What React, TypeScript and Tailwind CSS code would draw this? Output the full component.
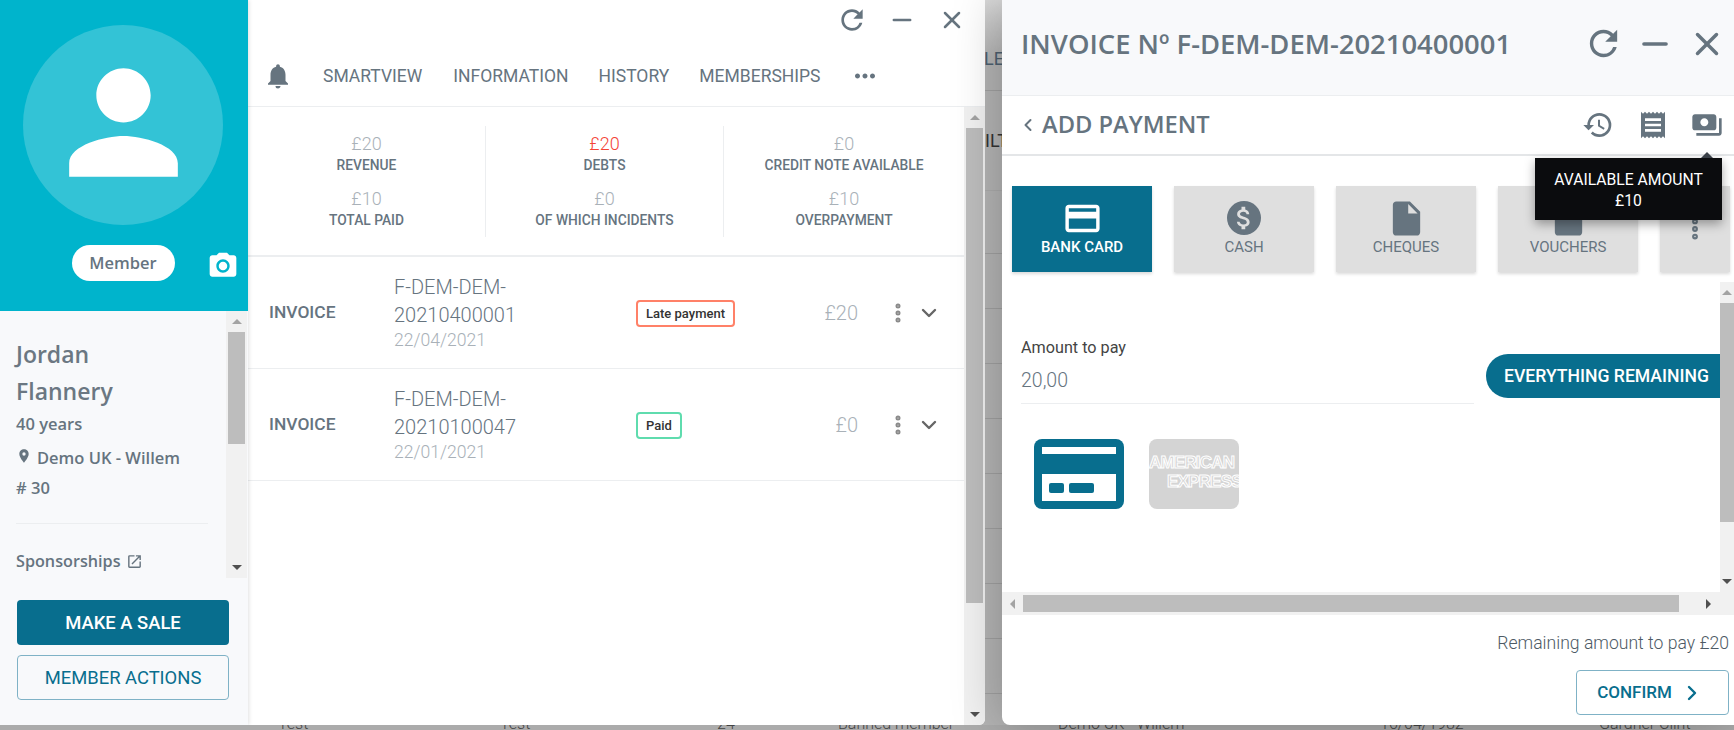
import { ChevronDown, ChevronLeft, ChevronRight, EllipsisVertical, Minus, X } from "lucide-react";
import { MdAttachMoney, MdCameraAlt, MdCreditCard, MdHistory, MdInsertDriveFile, MdLocationOn, MdMoreHoriz, MdNotifications, MdOpenInNew, MdPayments, MdPerson, MdReceipt, MdRefresh } from "react-icons/md";
import type { ReactNode } from "react";

const stats = [
  [
    { value: "£20", label: "REVENUE" },
    { value: "£10", label: "TOTAL PAID" },
  ],
  [
    { value: "£20", label: "DEBTS", red: true },
    { value: "£0", label: "OF WHICH INCIDENTS" },
  ],
  [
    { value: "£0", label: "CREDIT NOTE AVAILABLE" },
    { value: "£10", label: "OVERPAYMENT" },
  ],
];

const invoices = [
  { id1: "F-DEM-DEM-", id2: "20210400001", date: "22/04/2021", status: "Late payment", border: "border-[#ff8168]", amount: "£20" },
  { id1: "F-DEM-DEM-", id2: "20210100047", date: "22/01/2021", status: "Paid", border: "border-[#5fdcae]", amount: "£0" },
];

function Arrow({ dir }: { dir: "up" | "down" | "left" | "right" }) {
  const shape = {
    up: "border-x-[5px] border-b-[5px] border-x-transparent border-b-[#a3a3a3]",
    down: "border-x-[5px] border-t-[5px] border-x-transparent border-t-[#505050]",
    left: "border-y-[5px] border-r-[5px] border-y-transparent border-r-[#a3a3a3]",
    right: "border-y-[5px] border-l-[5px] border-y-transparent border-l-[#505050]",
  }[dir];
  return <div className={`w-0 h-0 ${shape}`} />;
}

function Tile({ icon, label, active }: { icon: ReactNode; label: string; active?: boolean }) {
  return (
    <div
      className={`w-[140px] h-[86px] shrink-0 flex flex-col items-center pt-[12px] shadow-[0_2px_3px_rgba(0,0,0,0.15)] ${
        active ? "bg-[#086e8e] text-white" : "bg-[#dfdfdf] text-[#66747f]"
      }`}
    >
      <div className="h-[40px] flex items-center justify-center">{icon}</div>
      <div className={`text-[15px] leading-[18px] ${active ? "font-medium" : ""}`}>{label}</div>
    </div>
  );
}

export default function App() {
  return (
    <div className="relative w-[1734px] h-[730px] overflow-hidden bg-[#b4b4b4] font-['Roboto',sans-serif] text-[#66747f]">
      <div className="flex h-[725px]">
        {/* Member panel */}
        <div className="w-[985px] shrink-0 flex bg-white rounded-br-[6px] overflow-hidden">
          <div className="w-[248px] shrink-0 flex flex-col bg-[#f8f9fb] shadow-[1px_0_4px_rgba(0,0,0,0.12)] z-10 font-['Open_Sans',sans-serif]">
            <div className="h-[311px] bg-[#00b4cc] flex flex-col items-center pt-[25px] pr-[2px]">
              <div className="w-[200px] h-[200px] rounded-full bg-[#33c3d6] flex items-center justify-center pb-[5px]">
                <MdPerson className="text-white" size={163} />
              </div>
              <div className="w-full relative flex justify-center mt-[20px]">
                <div className="w-[103px] h-[36px] rounded-full bg-white flex items-center justify-center text-[16.5px] font-semibold">Member</div>
                <MdCameraAlt className="absolute left-[207px] top-[5px] text-white" size={32} />
              </div>
            </div>
            <div className="h-[267px] flex">
              <div className="flex-1 pl-[16px] pt-[24px] pr-[10px] font-semibold overflow-hidden">
                <div className="text-[23px] leading-[38px] text-[#6b7782]">Jordan</div>
                <div className="text-[23px] leading-[37px] text-[#6b7782]">Flannery</div>
                <div className="text-[16.5px] leading-[28px]">40 years</div>
                <div className="text-[16.5px] leading-[28px] mt-[6px] flex items-center whitespace-nowrap">
                  <MdLocationOn size={16} className="-mt-[4px] mr-[5px] shrink-0" />
                  Demo UK - Willem
                </div>
                <div className="text-[16.5px] leading-[28px] mt-[2px]"># 30</div>
                <div className="h-px bg-[#eceef0] mt-[21px] mr-[8px]" />
                <div className="text-[16.2px] mt-[25px] flex items-center">
                  Sponsorships
                  <MdOpenInNew size={17} className="ml-[5px]" />
                </div>
              </div>
              <div className="w-[21px] mr-px shrink-0 bg-[#f1f1f1] flex flex-col items-center">
                <div className="h-[21px] flex items-center"><Arrow dir="up" /></div>
                <div className="w-[17px] h-[112px] bg-[#bdbdbd]" />
                <div className="flex-1" />
                <div className="h-[21px] flex items-center"><Arrow dir="down" /></div>
              </div>
            </div>
            <div className="pl-[17px] pr-[19px] pt-[22px]">
              <div className="h-[45px] rounded-[4px] bg-[#086e8e] text-white flex items-center justify-center text-[18.4px] font-medium font-['Roboto',sans-serif]">MAKE A SALE</div>
              <div className="h-[45px] mt-[10px] rounded-[4px] border border-[#7fb2c6] text-[#086e8e] flex items-center justify-center text-[18.4px] font-['Roboto',sans-serif]">MEMBER ACTIONS</div>
            </div>
          </div>

          <div className="flex-1 flex flex-col min-w-0">
            <div className="h-[107px] shrink-0 border-b border-[#eceef0]">
              <div className="flex justify-end items-center gap-[22px] pr-[19px] pt-[6px]">
                <div className="w-[28px] h-[28px] flex items-center justify-center"><MdRefresh size={32} className="shrink-0" /></div>
                <Minus size={28} strokeWidth={2.2} />
                <X size={28} strokeWidth={2.2} />
              </div>
              <div className="flex items-center mt-[27px] pl-[15px] text-[17.5px]">
                <MdNotifications size={30} />
                <span className="ml-[30px]">SMARTVIEW</span>
                <span className="ml-[31px]">INFORMATION</span>
                <span className="ml-[30px]">HISTORY</span>
                <span className="ml-[30px]">MEMBERSHIPS</span>
                <MdMoreHoriz size={30} className="ml-[30px]" />
              </div>
            </div>

            <div className="flex-1 flex min-h-0">
              <div className="flex-1 min-w-0">
                <div className="h-[150px] flex items-center border-b-2 border-[#eceef0]">
                  {stats.map((col, i) => (
                    <div key={i} className={`h-[111px] flex flex-col items-center ${i < 2 ? "w-[238px] border-r border-[#eceef0]" : "flex-1"}`}>
                      {col.map((s) => (
                        <div key={s.label} className="h-[56px] flex flex-col items-center pt-[8px]">
                          <div className={`text-[18px] leading-[20px] font-light ${"red" in s && s.red ? "text-[#f44336]" : "text-[#a9b1b8]"}`}>{s.value}</div>
                          <div className="text-[13.8px] leading-[20px] mt-px font-medium">{s.label}</div>
                        </div>
                      ))}
                    </div>
                  ))}
                </div>
                {invoices.map((inv) => (
                  <div key={inv.id2} className="h-[112px] flex items-center border-b border-[#eceef0]">
                    <div className="w-[146px] pl-[21px] text-[17.4px] font-medium">INVOICE</div>
                    <div className="w-[242px] text-[20px] font-light leading-[28px] -mt-[2px]">
                      <div>{inv.id1}</div>
                      <div>{inv.id2}</div>
                      <div className="text-[17.6px] leading-[22px] text-[#a9b1b8]">{inv.date}</div>
                    </div>
                    <div className="flex-1 pt-[2px]">
                      <span className={`inline-block h-[27px] leading-[23px] px-[8px] rounded-[4px] border-2 bg-white text-[13px] font-medium text-[#333] ${inv.border}`}>{inv.status}</span>
                    </div>
                    <div className="text-[20px] font-light text-[#a9b1b8]">{inv.amount}</div>
                    <EllipsisVertical size={24} strokeWidth={3} className="ml-[28px] text-[#8a8a8a]" />
                    <ChevronDown size={24} strokeWidth={2.4} className="ml-[7px] mr-[23px] text-[#666]" />
                  </div>
                ))}
              </div>
              <div className="w-[21px] shrink-0 bg-[#f1f1f1] flex flex-col items-center">
                <div className="h-[21px] flex items-center"><Arrow dir="up" /></div>
                <div className="w-[17px] h-[475px] bg-[#bdbdbd]" />
                <div className="flex-1" />
                <div className="h-[21px] flex items-center"><Arrow dir="down" /></div>
              </div>
            </div>
          </div>
        </div>

        {/* Strip of the page behind */}
        <div className="w-[17px] shrink-0 text-[18px] overflow-hidden whitespace-nowrap bg-gradient-to-b from-[#d8d8d8] via-[#b4b4b4] via-[8%] to-[#b4b4b4]">
          <div className="h-[91px] pt-[48px] leading-[22px] border-b border-[#a0a0a0] text-[#4d6070]"><span className="-ml-[1px]">LEF</span></div>
          <div className="h-[100px] pt-[39px] leading-[22px] border-b border-[#ababab] text-[#333]"><span>ILT</span></div>
          <div className="h-[63px] border-b border-[#a0a0a0]" />
          {[0, 1, 2, 3, 4, 5, 6, 7, 8].map((n) => (
            <div key={n} className="h-[55px] border-b border-[#a0a0a0]" />
          ))}
        </div>

        {/* Invoice panel */}
        <div className="relative w-[732px] shrink-0 bg-white rounded-bl-[8px] flex flex-col shadow-[0_0_50px_rgba(0,0,0,0.25)] z-20">
          <div className="h-[96px] shrink-0 bg-[#f8f9fb] border-b border-[#eceef0] flex items-center pl-[19px] pr-[8px] pb-[8px] font-['Open_Sans',sans-serif]">
            <div className="flex-1 text-[27.4px] font-semibold text-[#66747f] whitespace-nowrap">INVOICE Nº F-DEM-DEM-20210400001</div>
            <div className="flex items-center gap-[14px]">
              <div className="w-[38px] h-[38px] flex items-center justify-center"><MdRefresh size={41} className="shrink-0" /></div>
              <Minus size={38} strokeWidth={2.2} />
              <X size={38} strokeWidth={2.2} />
            </div>
          </div>
          <div className="h-[60px] shrink-0 border-b-2 border-[#e4e6e8] flex items-center pl-[16px] pr-[11px]">
            <ChevronLeft size={20} strokeWidth={2.4} />
            <div className="flex-1 ml-[4px] text-[23.7px] font-['Open_Sans',sans-serif] font-semibold">ADD PAYMENT</div>
            <div className="flex items-center gap-[22.5px]">
              <MdHistory size={32} />
              <MdReceipt size={32} />
              <MdPayments size={32} />
            </div>
          </div>
          <div className="flex gap-[22px] pl-[10px] pt-[30px] h-[126px] shrink-0 overflow-hidden">
            <Tile label="BANK CARD" active icon={<MdCreditCard size={41} />} />
            <Tile label="CASH" icon={<span className="w-[34px] h-[34px] rounded-full bg-[#66747f] flex items-center justify-center"><MdAttachMoney size={30} className="text-[#dfdfdf]" /></span>} />
            <Tile label="CHEQUES" icon={<MdInsertDriveFile size={41} />} />
            <Tile label="VOUCHERS" icon={<MdInsertDriveFile size={41} />} />
            <div className="w-[70px] h-[86px] shrink-0 bg-[#dfdfdf] flex justify-center items-center shadow-[0_2px_3px_rgba(0,0,0,0.15)]">
              <EllipsisVertical size={26} strokeWidth={3.4} />
            </div>
          </div>
          <div className="h-[333px] shrink-0 flex flex-col">
            <div className="flex-1 flex min-h-0">
              <div className="flex-1 pl-[19px] min-w-0">
                <div className="flex items-start pt-[55px]">
                  <div className="w-[453px] h-[67px] shrink-0 border-b border-[#eceef0] text-[16.2px] text-[#444]">
                    <div className="leading-[22px]">Amount to pay</div>
                    <div className="text-[19.5px] leading-[28px] mt-[8px] font-light text-[#66747f]">20,00</div>
                  </div>
                  <div className="ml-[12px] w-[235px] h-[44px] mt-[17px] shrink-0 pl-[18px] rounded-l-full rounded-r-[20px] bg-[#086e8e] text-white font-medium text-[17.6px] flex items-center whitespace-nowrap">EVERYTHING REMAINING</div>
                </div>
                <div className="flex gap-[25px] pl-[13px] pt-[35px]">
                  <div className="w-[90px] h-[70px] rounded-[8px] bg-[#086e8e] p-[8px] flex flex-col gap-[20px]">
                    <div className="h-[7px] bg-white" />
                    <div className="flex-1 bg-white flex items-center gap-[5px] px-[7px]">
                      <div className="w-[15px] h-[10px] rounded-[2px] bg-[#086e8e]" />
                      <div className="w-[25px] h-[10px] rounded-[2px] bg-[#086e8e]" />
                    </div>
                  </div>
                  <div className="w-[90px] h-[70px] rounded-[8px] bg-[#d4d4d4] flex flex-col justify-center pb-[4px] font-['Liberation_Sans',sans-serif] font-bold text-[17px] leading-[19px] tracking-[-0.8px] text-[#d4d4d4] [-webkit-text-stroke:1px_white] overflow-hidden whitespace-nowrap">
                    <div>AMERICAN</div>
                    <div className="pl-[18px]">EXPRESS</div>
                  </div>
                </div>
              </div>
              <div className="w-[14px] shrink-0 bg-[#f1f1f1] flex flex-col items-center">
                <div className="h-[21px] flex items-center"><Arrow dir="up" /></div>
                <div className="w-full h-[219px] bg-[#bdbdbd]" />
                <div className="flex-1" />
                <div className="h-[21px] flex items-center"><Arrow dir="down" /></div>
              </div>
            </div>
            <div className="h-[23px] shrink-0 bg-[#f1f1f1] flex items-center">
              <div className="w-[21px] flex justify-center"><Arrow dir="left" /></div>
              <div className="w-[656px] h-[17px] bg-[#bdbdbd]" />
              <div className="ml-[27px]"><Arrow dir="right" /></div>
            </div>
          </div>
          <div className="flex-1 flex flex-col items-end pr-[5px] pt-[18px]">
            <div className="text-[17.6px] leading-[20px] font-light text-[#4d5a65]">Remaining amount to pay £20</div>
            <div className="mt-[17px] w-[153px] h-[45px] rounded-[4px] border border-[#7fb2c6] text-[#086e8e] flex items-center justify-center text-[17px] font-medium pr-[4px]">
              CONFIRM
              <ChevronRight size={24} strokeWidth={2.4} className="ml-[8px]" />
            </div>
          </div>
        </div>
      </div>

      {/* Row of the table behind, cut off by the panels */}
      <div className="h-[5px] overflow-hidden bg-[#ababab]">
        <div className="flex -mt-[11px] text-[16px] leading-[20px] font-light text-[#444]">
          <span className="ml-[278px] w-[222px] shrink-0">Test</span>
          <span className="w-[217px] shrink-0">Test</span>
          <span className="w-[121px] shrink-0">24</span>
          <span className="w-[220px] shrink-0">Banned member</span>
          <span className="w-[322px] shrink-0">Demo UK - Willem</span>
          <span className="w-[219px] shrink-0">16/04/1982</span>
          <span className="shrink-0">Gardner Clint</span>
        </div>
      </div>

      {/* Tooltip */}
      <div className="absolute left-[1535px] top-[158px] w-[187px] h-[62px] bg-[#0b0c0e] text-white text-[15.7px] flex flex-col items-center justify-center pt-[2px] leading-[21px] shadow-[0_4px_10px_rgba(0,0,0,0.35)] z-30">
        <div>AVAILABLE AMOUNT</div>
        <div>£10</div>
        <div className="absolute -top-[6px] left-[166px] w-0 h-0 border-x-[6px] border-b-[6px] border-x-transparent border-b-[#3a4048]" />
      </div>
    </div>
  );
}
